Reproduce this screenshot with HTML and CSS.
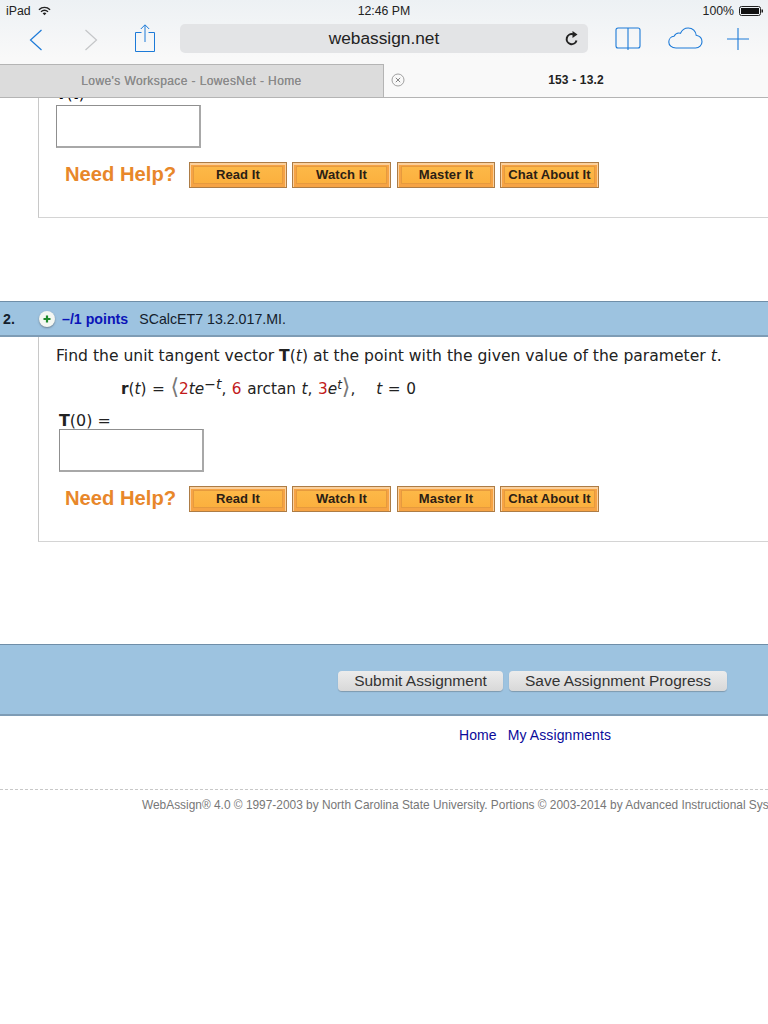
FILE: index.html
```html
<!DOCTYPE html>
<html lang="en">
<head>
    <meta charset="UTF-8">
    <meta name="viewport" content="width=device-width, initial-scale=1.0">
    <title>webassign.net</title>
    <link rel="stylesheet" href="styles.css">
</head>
<body>
    <header class="chrome">
        <div class="status">
            <div class="status-left">
                <span>iPad</span>
                <svg class="wifi" width="13" height="10" viewBox="0 0 14 10">
                    <path d="M1 3.6C4.6.4 9.4.4 13 3.6" fill="none" stroke="#222" stroke-width="1.5"/>
                    <path d="M3.2 5.8C5.5 3.8 8.5 3.8 10.8 5.8" fill="none" stroke="#222" stroke-width="1.5"/>
                    <path d="M5 7.4C6.2 6.4 7.8 6.4 9 7.4L7 9.6Z" fill="#222"/>
                </svg>
            </div>
            <div class="status-time">12:46 PM</div>
            <div class="status-right">
                <span>100%</span>
                <svg width="24" height="10" viewBox="0 0 24 10">
                    <rect x=".5" y=".5" width="21" height="9" rx="2" fill="none" stroke="#222"/>
                    <rect x="2" y="2" width="18" height="6" fill="#111"/>
                    <rect x="22.5" y="3.5" width="1.5" height="3" fill="#222"/>
                </svg>
            </div>
        </div>
        <div class="toolbar">
            <svg class="ico-back" width="14" height="22" viewBox="0 0 14 22"><path d="M12.5 1 1.5 11l11 10" fill="none" stroke="#1c7ad8" stroke-width="1.2"/></svg>
            <svg class="ico-forward" width="14" height="22" viewBox="0 0 14 22"><path d="M1.5 1l11 10-11 10" fill="none" stroke="#c4c6c8" stroke-width="1.2"/></svg>
            <svg class="ico-share" width="20" height="28" viewBox="0 0 20 28"><path d="M6.500 8.500H.5v19h19v-19h-6M10 1v17M5.800 5 10 .8 14.200 5" fill="none" stroke="#1c7ad8"/></svg>
            <div class="url">
                <span class="url-text">webassign.net</span>
                <svg class="ico-reload" width="14" height="15" viewBox="0 0 14 15"><path d="M11.500 9.500A5 5 0 1 1 8 3.300" fill="none" stroke="#222" stroke-width="2"/><path d="M7.500 0 12.500 3.400 7.500 7Z" fill="#222"/></svg>
            </div>
            <svg class="ico-book" width="26" height="24" viewBox="0 0 26 24"><path d="M3 1h20a2 2 0 0 1 2 2v16a2 2 0 0 1-2 2H3a2 2 0 0 1-2-2V3a2 2 0 0 1 2-2ZM13 1v22" fill="none" stroke="#1c7ad8" stroke-width="1.100"/></svg>
            <svg class="ico-cloud" width="35" height="22" viewBox="0 0 35 22"><path d="M8 21C3.500 21 .8 18.200.8 15c0-3.200 2.400-5.400 5.200-5.700C7.500 6.500 10 5.500 12.500 6.300 14 2.800 17 1 20.200 1c4.600 0 7.600 3.300 8 7.300 3.200.6 5.800 3 5.800 6.500 0 3.500-2.800 6.200-6.500 6.200Z" fill="none" stroke="#1c7ad8" stroke-width="1.100"/></svg>
            <svg class="ico-plus" width="22" height="22" viewBox="0 0 22 22"><path d="M11 0v22M0 11h22" fill="none" stroke="#1c7ad8" stroke-width="1.100"/></svg>
        </div>
        <div class="tabs">
            <div class="tab-off">Lowe's Workspace - LowesNet - Home</div>
            <div class="tab-on">
                <svg class="ico-close" width="14" height="14" viewBox="0 0 14 14"><circle cx="7" cy="7" r="6" fill="none" stroke="#8a8a8a" stroke-width=".8"/><path d="M4.800 4.800l4.400 4.400M9.200 4.800l-4.400 4.400" fill="none" stroke="#666" stroke-width=".8"/></svg>
                <span class="tab-title">153 - 13.2</span>
            </div>
        </div>
    </header>

    <main class="page">
        <section class="panel panel-first">
            <div class="cut-label"><span><b>T</b>(<i>t</i>) =</span></div>
            <div class="answer answer-first"></div>
            <div class="help">
                <span class="help-title">Need Help?</span>
                <a class="help-btn btn-read">Read It</a>
                <a class="help-btn btn-watch">Watch It</a>
                <a class="help-btn btn-master">Master It</a>
                <a class="help-btn btn-chat">Chat About It</a>
            </div>
        </section>

        <div class="question-bar">
            <span class="q-num">2.</span>
            <span class="q-plus"><svg width="10" height="10" viewBox="0 0 10 10"><path d="M5 1.500v7M1.500 5h7" stroke="#1f8a2c" stroke-width="2.200"/></svg></span>
            <span class="q-points">–/1 points</span>
            <span class="q-code">SCalcET7 13.2.017.MI.</span>
        </div>

        <section class="panel panel-second">
            <p class="q-text">Find the unit tangent vector <b>T</b>(<i>t</i>) at the point with the given value of the parameter <i>t</i>.</p>
            <p class="q-math"><b>r</b>(<i>t</i>) = <span class="bracket">⟨</span><span class="red">2</span><i>te</i><sup>−<i>t</i></sup>, <span class="red">6</span> arctan <i>t</i>, <span class="red">3</span><i>e</i><sup class="sup-small"><i>t</i></sup><span class="bracket">⟩</span>,<span class="math-gap"></span><i>t</i> = 0</p>
            <p class="q-label"><b>T</b>(0) =</p>
            <div class="answer"></div>
            <div class="help">
                <span class="help-title">Need Help?</span>
                <a class="help-btn btn-read">Read It</a>
                <a class="help-btn btn-watch">Watch It</a>
                <a class="help-btn btn-master">Master It</a>
                <a class="help-btn btn-chat">Chat About It</a>
            </div>
        </section>

        <div class="submit-bar">
            <button class="submit-btn btn-submit">Submit Assignment</button>
            <button class="submit-btn btn-save">Save Assignment Progress</button>
        </div>

        <nav class="links">
            <a>Home</a>
            <a>My Assignments</a>
        </nav>

        <footer class="copyright">WebAssign® 4.0 © 1997-2003 by North Carolina State University. Portions © 2003-2014 by Advanced Instructional Systems, Inc.</footer>
    </main>
</body>
</html>
```
FILE: styles.css
```css
html, body {
    margin: 0;
    padding: 0;
    background: #fff;
}
body {
    width: 768px;
    height: 1024px;
    overflow: hidden;
    font-family: "Liberation Sans", Arial, sans-serif;
}

/* browser chrome */
.chrome {
    height: 98px;
    box-sizing: border-box;
    background: linear-gradient(#edf1f4, #f9f9f9 60%);
    border-bottom: 1px solid #b4b4b4;
}
.status {
    height: 21px;
    padding: 0 5px 0 6px;
    display: grid;
    grid-template-columns: 1fr auto 1fr;
    align-items: center;
    font-size: 12.3px;
    color: #222;
}
.status-left {
    display: flex;
    align-items: center;
    gap: 7px;
}
.status-time {
    padding-right: 1px;
}
.status-right {
    display: flex;
    justify-content: flex-end;
    align-items: center;
    gap: 5px;
}
.toolbar {
    height: 43px;
    display: flex;
    align-items: flex-start;
}
.ico-back {
    margin: 8px 0 0 29px;
}
.ico-forward {
    margin: 8px 0 0 41px;
}
.ico-share {
    margin: 3px 0 0 37px;
}
.url {
    width: 408px;
    height: 29px;
    margin: 3px 0 0 25px;
    border-radius: 5px;
    background: #e3e4e6;
    position: relative;
    display: flex;
    align-items: center;
    justify-content: center;
    font-size: 17.3px;
    color: #222;
}
.ico-reload {
    position: absolute;
    right: 9px;
    top: 7px;
}
.ico-book {
    margin: 6px 0 0 27px;
}
.ico-cloud {
    margin: 6px 0 0 27px;
}
.ico-plus {
    margin: 7px 0 0 24px;
}
.tabs {
    display: grid;
    grid-template-columns: 384px 384px;
    height: 33px;
}
.tab-off {
    box-sizing: border-box;
    background: #dcdcdc;
    border-top: 1px solid #b4b4b4;
    border-right: 1px solid #b4b4b4;
    color: #8a8a8a;
    font-size: 12px;
    letter-spacing: .4px;
    padding-bottom: 1px;
    display: flex;
    align-items: center;
    justify-content: center;
    text-shadow: 0 0 .4px #8a8a8a;
}
.tab-on {
    position: relative;
    display: flex;
    align-items: center;
    justify-content: center;
    padding-bottom: 1px;
    font-size: 12px;
    letter-spacing: .15px;
    font-weight: bold;
    color: #222;
}
.ico-close {
    position: absolute;
    left: 7px;
    top: 9px;
}

/* question panels */
.panel {
    margin-left: 38px;
    box-sizing: border-box;
    border-left: 1px solid #c8c8c8;
    border-bottom: 1px solid #d4d4d4;
}
.panel-first {
    height: 120px;
}
.panel-second {
    height: 205px;
}
.cut-label {
    height: 4px;
    overflow: hidden;
    padding-left: 17px;
    display: flex;
    align-items: flex-end;
    font-family: "DejaVu Sans", Verdana, sans-serif;
    font-size: 15.5px;
    line-height: 16px;
}
.cut-label span {
    display: block;
    flex: none;
}
.answer {
    width: 145px;
    height: 43px;
    box-sizing: border-box;
    margin-left: 20px;
    border: 1px solid #8f8f8f;
    border-right-width: 2px;
    border-bottom-width: 2px;
    border-right-color: #a8a8a8;
    border-bottom-color: #a8a8a8;
    background: #fff;
}
.answer-first {
    margin-left: 17px;
    margin-top: 3px;
}
.help {
    margin: 13px 0 0 26px;
    height: 27px;
    display: flex;
    align-items: center;
}
.help-title {
    width: 124px;
    flex: none;
    font-size: 20.2px;
    font-weight: bold;
    color: #e8872a;
    white-space: nowrap;
}
.help-btn {
    box-sizing: border-box;
    height: 26px;
    flex: none;
    border: 1px solid #ad7c45;
    background: linear-gradient(#fdba4a, #fbae3c);
    box-shadow: inset 0 1px 0 1px #fbd09c, inset 0 0 0 3px #f6a344, inset 0 0 0 4px #e69a3e;
    display: flex;
    align-items: center;
    justify-content: center;
    font-size: 13px;
    letter-spacing: .1px;
    font-weight: bold;
    color: #2b2014;
    white-space: nowrap;
}
.btn-read {
    width: 98px;
}
.btn-watch {
    width: 99px;
    margin-left: 5px;
}
.btn-master {
    width: 98px;
    margin-left: 6px;
}
.btn-chat {
    width: 99px;
    margin-left: 5px;
}
.question-bar {
    margin-top: 83px;
    height: 36px;
    box-sizing: border-box;
    background: #9dc3e0;
    border-top: 1px solid #6f8ea8;
    border-bottom: 2px solid #7e9cb5;
    display: flex;
    align-items: center;
    color: #14202c;
    font-size: 14.2px;
}
.q-num {
    width: 38px;
    padding-left: 3px;
    box-sizing: border-box;
    font-weight: bold;
}
.q-plus {
    width: 16px;
    height: 16px;
    margin-left: 1px;
    border-radius: 50%;
    background: #f4f7f2;
    box-shadow: 0 1px 2px #6b7f90;
    display: flex;
    align-items: center;
    justify-content: center;
}
.q-points {
    margin-left: 7px;
    font-weight: bold;
    color: #0b14b8;
}
.q-code {
    margin-left: 11px;
}
.q-text, .q-math, .q-label {
    margin: 0;
    font-family: "DejaVu Sans", Verdana, sans-serif;
    color: #222;
    white-space: nowrap;
}
.q-text {
    padding: 10px 0 0 17px;
    font-size: 15.6px;
    line-height: 18px;
}
.q-math {
    padding: 14px 0 0 82px;
    font-size: 15.3px;
    word-spacing: .7px;
    line-height: 21px;
    height: 21px;
}
.q-math sup {
    font-size: 14px;
    line-height: 0;
    vertical-align: 5px;
}
.q-math .sup-small {
    font-size: 12px;
}
.q-math .red {
    color: #c21a1a;
}
.q-math .bracket {
    color: #777;
    font-size: 22px;
    line-height: 0;
}
.math-gap {
    display: inline-block;
    width: 21px;
}
.q-label {
    padding: 13px 0 0 20px;
    font-size: 15.9px;
    line-height: 16px;
}

/* bottom of page */
.submit-bar {
    margin-top: 102px;
    height: 72px;
    box-sizing: border-box;
    background: #9dc3e0;
    border-top: 1px solid #6f8ea8;
    border-bottom: 2px solid #7e9cb5;
    display: flex;
    padding: 26px 0 0 338px;
    gap: 6px;
    align-items: flex-start;
}
.submit-btn {
    height: 20px;
    padding: 0;
    border: none;
    border-radius: 4px;
    background: linear-gradient(#ececec, #d8d8d8);
    box-shadow: 0 1px 1px #7e99ae;
    font-family: "Liberation Sans", Arial, sans-serif;
    font-size: 15.5px;
    color: #333;
}
.btn-submit {
    width: 165px;
}
.btn-save {
    width: 218px;
}
.links {
    padding: 10px 0 0 459px;
    display: flex;
    gap: 11px;
    font-size: 14px;
    letter-spacing: .1px;
    line-height: 18px;
    color: #0a0a9a;
}
.copyright {
    margin-top: 45px;
    padding: 8px 0 0 142px;
    border-top: 1px dashed #c8c8c8;
    font-size: 11.9px;
    line-height: 14px;
    color: #777;
    white-space: nowrap;
    overflow: hidden;
}
```
